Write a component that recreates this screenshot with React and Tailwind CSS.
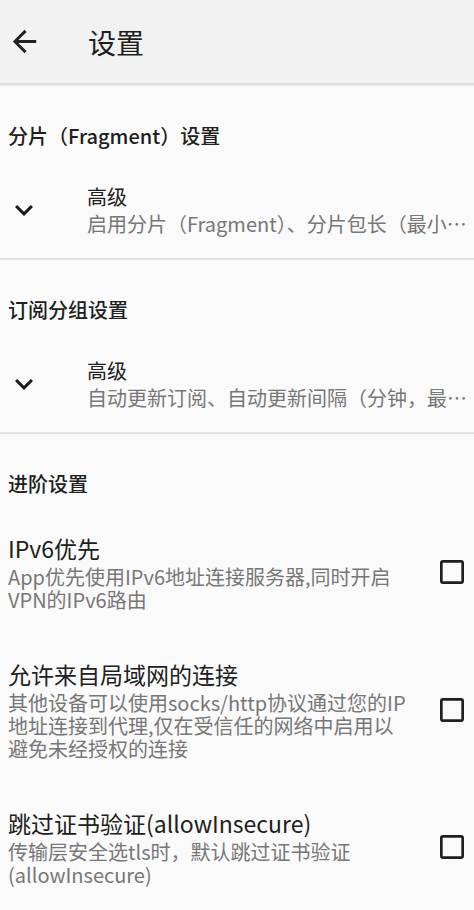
import React from 'react';

const FONT = { fontFamily: '"Noto Sans CJK SC", "Noto Sans", sans-serif' };

function BackIcon() {
    return (
        <svg width="35" height="35" viewBox="0 0 24 24" fill="#222222">
            <path d="M20 11H7.83l5.59-5.59L12 4l-8 8 8 8 1.41-1.41L7.83 13H20v-2z" />
        </svg>
    );
}

function ChevronIcon() {
    return (
        <svg width="36" height="36" viewBox="0 0 24 24" fill="#1a1a1a">
            <path d="M16.59 8.59L12 13.17 7.41 8.59 6 10l6 6 6-6z" />
        </svg>
    );
}

function CheckboxIcon() {
    return (
        <svg width="32" height="32" viewBox="0 0 24 24" fill="#1f1f1f">
            <path d="M19 5v14H5V5h14m0-2H5c-1.11 0-2 .9-2 2v14c0 1.1.89 2 2 2h14c1.1 0 2-.9 2-2V5c0-1.1-.9-2-2-2z" />
        </svg>
    );
}

function CategoryTitle({ children }) {
    return (
        <div className="pl-2 pt-[36px] text-[20px] leading-[28px] font-medium text-[#202020]">
            {children}
        </div>
    );
}

function AdvancedRow({ summary }) {
    return (
        <div className="flex items-center pt-[33px] pb-[21px] pr-1">
            <div className="w-[87px] shrink-0 pl-[6px] flex items-center">
                <ChevronIcon />
            </div>
            <div className="flex-1 min-w-0 flex flex-col">
                <span className="text-[20px] leading-[27px] text-[#202020]">高级</span>
                <span className="text-[20px] leading-[27px] text-[#777777] truncate">{summary}</span>
            </div>
        </div>
    );
}

function CheckItem({ title, summary }) {
    return (
        <div className="flex items-center py-[24px]">
            <div className="w-[408px] shrink-0 pl-2 flex flex-col">
                <span className="text-[23px] leading-[30px] text-[#202020]">{title}</span>
                <span className="mt-[2px] text-[20px] leading-[23px] text-[#777777]">{summary}</span>
            </div>
            <div className="ml-[28px] flex items-center">
                <CheckboxIcon />
            </div>
        </div>
    );
}

export default function App() {
    return (
        <div className="w-[474px] h-[910px] overflow-hidden bg-[#fafafa]" style={FONT}>
            {/* Toolbar */}
            <div className="h-[83px] bg-[#f2f2f2] flex items-center">
                <button type="button" className="pl-[7px] w-[88px] flex items-center" aria-label="返回">
                    <BackIcon />
                </button>
                <span className="text-[28px] leading-none text-[#1e1e1e]">设置</span>
            </div>
            <div className="h-[3px] bg-[#dcdcdc] border-b border-[#ececec]" />

            <CategoryTitle>分片（Fragment）设置</CategoryTitle>
            <AdvancedRow summary="启用分片（Fragment）、分片包长（最小-最大）、分片间隔（最小-最大）" />
            <div className="h-[2px] bg-[#e2e2e2]" />

            <CategoryTitle>订阅分组设置</CategoryTitle>
            <AdvancedRow summary="自动更新订阅、自动更新间隔（分钟，最小值15）" />
            <div className="h-[2px] bg-[#e2e2e2]" />

            <div className="pb-[11px]">
                <CategoryTitle>进阶设置</CategoryTitle>
            </div>
            <CheckItem
                title="IPv6优先"
                summary="App优先使用IPv6地址连接服务器,同时开启VPN的IPv6路由"
            />
            <CheckItem
                title="允许来自局域网的连接"
                summary="其他设备可以使用socks/http协议通过您的IP地址连接到代理,仅在受信任的网络中启用以避免未经授权的连接"
            />
            <CheckItem
                title="跳过证书验证(allowInsecure)"
                summary="传输层安全选tls时，默认跳过证书验证(allowInsecure)"
            />
        </div>
    );
}
